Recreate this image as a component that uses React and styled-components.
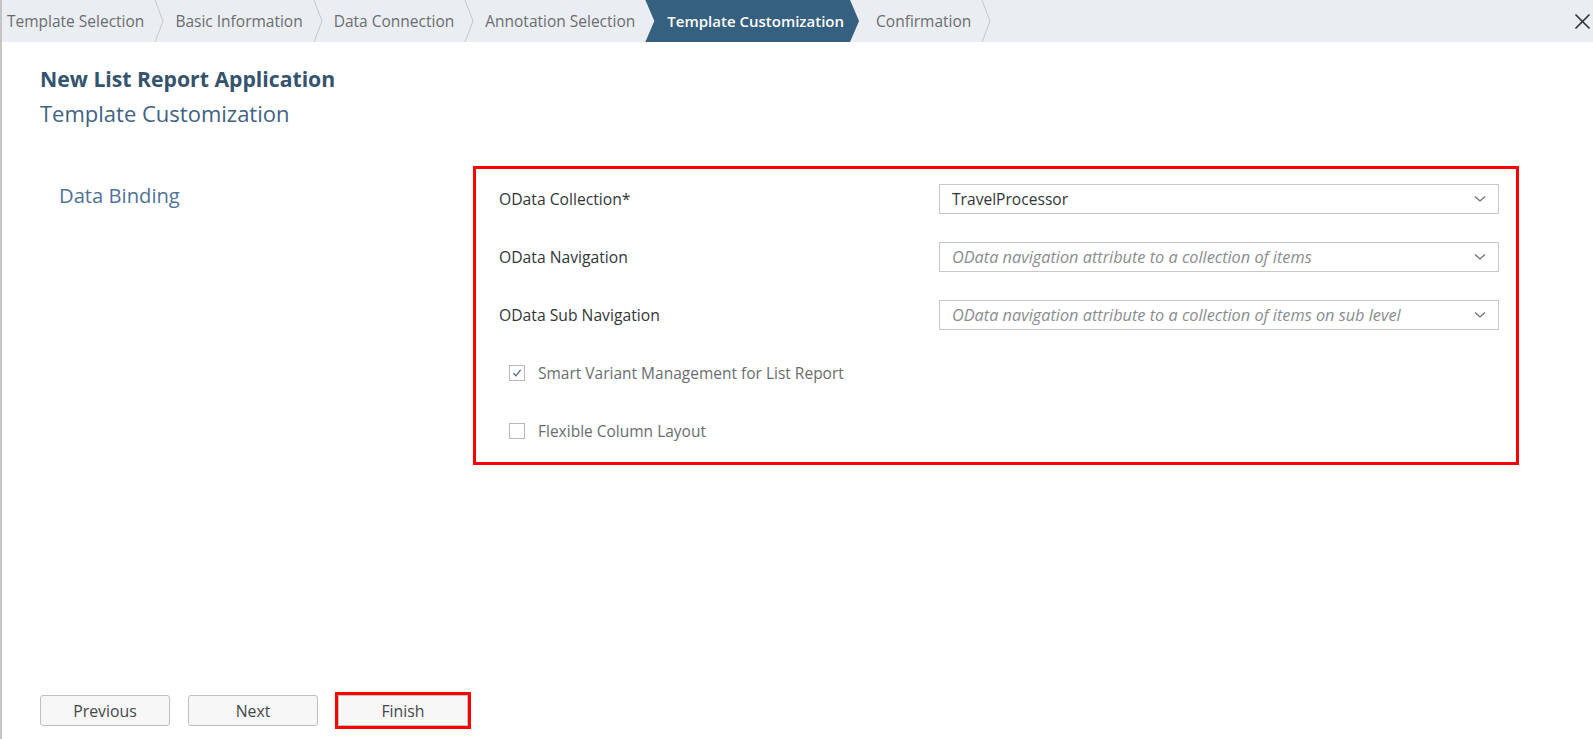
import React, { useState } from "react"
import styled, { createGlobalStyle } from "styled-components"

const GlobalStyle = createGlobalStyle`
  html, body {
    margin: 0;
    padding: 0;
    background: #ffffff;
    font-family: "Open Sans", "Noto Sans", Arial, sans-serif;
  }
`

const steps = [
  "Template Selection",
  "Basic Information",
  "Data Connection",
  "Annotation Selection",
  "Template Customization",
  "Confirmation",
]

const Page = styled.div`
  display: flex;
  flex-direction: column;
  min-height: 100vh;
  box-sizing: border-box;
  border-left: 2px solid #c4c4c4;
`

const StepBar = styled.div`
  display: flex;
  align-items: stretch;
  height: 42px;
  background: #eaeef2;
`

const Step = styled.div`
  display: flex;
  align-items: center;
  height: 42px;
  padding: 0 10px 0 ${(p) => (p.$first ? 5 : p.$afterActive ? 17 : 11)}px;
  font-size: 15.5px;
  color: #6a6d70;
  white-space: nowrap;
  ${(p) =>
    p.$active &&
    `
    background: #35607f;
    color: #ffffff;
    font-size: 15px;
    font-weight: 600;
    padding: 0 15px 0 22px;
    clip-path: polygon(0 0, calc(100% - 9px) 0, 100% 50%, calc(100% - 9px) 100%, 0 100%, 9px 50%);
  `}
`

const Separator = styled.svg`
  flex: none;
  width: 10px;
  height: 42px;
`

const CloseButton = styled.button`
  margin-left: auto;
  width: 21px;
  border: none;
  background: transparent;
  display: flex;
  align-items: center;
  justify-content: center;
  padding: 0;
  cursor: pointer;
`

const Header = styled.div`
  padding: 23px 0 0 38px;
`

const Title = styled.h1`
  margin: 0;
  font-size: 21.2px;
  font-weight: 700;
  color: #34536e;
  line-height: 28px;
`

const Subtitle = styled.h2`
  margin: 6px 0 0;
  font-size: 22px;
  font-weight: 400;
  color: #3f6283;
  line-height: 28px;
`

const Section = styled.div`
  display: flex;
  margin-top: 39px;
  padding-left: 57px;
`

const SectionTitle = styled.div`
  width: 414px;
  flex: none;
  padding-top: 15px;
  font-size: 20.2px;
  line-height: 28px;
  color: #4f7397;
`

const Highlight = styled.div`
  width: 1046px;
  box-sizing: border-box;
  border: 3px solid #ff0000;
  padding: 1px 17px 2px 23px;
`

const FieldRow = styled.div`
  display: grid;
  grid-template-columns: 440px 1fr;
  align-items: center;
  height: 58px;
`

const Label = styled.label`
  font-size: 15.7px;
  color: #32363a;
`

const SelectBox = styled.div`
  display: flex;
  align-items: center;
  height: 30px;
  box-sizing: border-box;
  border: 1px solid #c8c8c8;
  padding: 0 12px;
  background: #fff;
  font-size: ${(p) => (p.$placeholder ? 16.3 : 15.6)}px;
  color: ${(p) => (p.$placeholder ? "#8a8d90" : "#32363a")};
  font-style: ${(p) => (p.$placeholder ? "italic" : "normal")};
`

const SelectText = styled.span`
  flex: 1;
`

const CheckRow = styled.label`
  display: flex;
  align-items: center;
  height: 58px;
  padding-left: 10px;
  font-size: 15.5px;
  color: #6a6d70;
  cursor: pointer;
`

const Box = styled.span`
  width: 16px;
  height: 16px;
  box-sizing: border-box;
  border: 1px solid #b8b8b8;
  margin-right: 13px;
  display: flex;
  align-items: center;
  justify-content: center;
  background: #fff;
`

const Footer = styled.div`
  margin-top: auto;
  display: flex;
  align-items: center;
  padding: 0 0 13px 38px;
`

const Button = styled.button`
  width: 130px;
  height: 31px;
  margin-left: ${(p) => p.$gap || 0}px;
  box-sizing: border-box;
  border: 1px solid #bfbfbf;
  border-radius: 3px;
  background: #f7f7f7;
  font-family: inherit;
  font-size: 15.8px;
  color: #45484b;
  cursor: pointer;
  ${(p) => p.$marked && `outline: 3px solid #ff0000; border-radius: 0;`}
`

const Chevron = () => (
  <svg width="12" height="8" viewBox="0 0 12 8">
    <path d="M1 1.5 L6 6 L11 1.5" fill="none" stroke="#6a6d70" strokeWidth="1.2" />
  </svg>
)

const Select = ({ value, placeholder }) => (
  <SelectBox $placeholder={!value}>
    <SelectText>{value || placeholder}</SelectText>
    <Chevron />
  </SelectBox>
)

const Checkbox = ({ checked, onChange, children }) => (
  <CheckRow onClick={onChange}>
    <Box>
      {checked && (
        <svg width="10" height="10" viewBox="0 0 10 10">
          <path d="M1.5 5.2 L4 7.8 L8.6 1.8" fill="none" stroke="#4a6b8a" strokeWidth="1.3" />
        </svg>
      )}
    </Box>
    {children}
  </CheckRow>
)

const App = () => {
  const [smartVariant, setSmartVariant] = useState(true)
  const [flexible, setFlexible] = useState(false)
  const activeIndex = 4

  return (
    <Page>
      <GlobalStyle />
      <StepBar>
        {steps.map((step, index) => (
          <React.Fragment key={step}>
            <Step
              $active={index === activeIndex}
              $first={index === 0}
              $afterActive={index === activeIndex + 1}
            >
              {step}
            </Step>
            {index !== activeIndex && index !== activeIndex - 1 && (
              <Separator viewBox="0 0 10 42">
                <path d="M1 0 L9 21 L1 42" fill="none" stroke="#c3c8cd" strokeWidth="1" />
              </Separator>
            )}
          </React.Fragment>
        ))}
        <CloseButton aria-label="Close">
          <svg width="17" height="17" viewBox="0 0 17 17">
            <path d="M1.5 1.5 L15.5 15.5 M15.5 1.5 L1.5 15.5" stroke="#32363a" strokeWidth="1.7" />
          </svg>
        </CloseButton>
      </StepBar>

      <Header>
        <Title>New List Report Application</Title>
        <Subtitle>Template Customization</Subtitle>
      </Header>

      <Section>
        <SectionTitle>Data Binding</SectionTitle>
        <Highlight>
          <FieldRow>
            <Label>OData Collection*</Label>
            <Select value="TravelProcessor" />
          </FieldRow>
          <FieldRow>
            <Label>OData Navigation</Label>
            <Select placeholder="OData navigation attribute to a collection of items" />
          </FieldRow>
          <FieldRow>
            <Label>OData Sub Navigation</Label>
            <Select placeholder="OData navigation attribute to a collection of items on sub level" />
          </FieldRow>
          <Checkbox checked={smartVariant} onChange={() => setSmartVariant(!smartVariant)}>
            Smart Variant Management for List Report
          </Checkbox>
          <Checkbox checked={flexible} onChange={() => setFlexible(!flexible)}>
            Flexible Column Layout
          </Checkbox>
        </Highlight>
      </Section>

      <Footer>
        <Button>Previous</Button>
        <Button $gap={18}>Next</Button>
        <Button $gap={20} $marked>
          Finish
        </Button>
      </Footer>
    </Page>
  )
}

export default App
